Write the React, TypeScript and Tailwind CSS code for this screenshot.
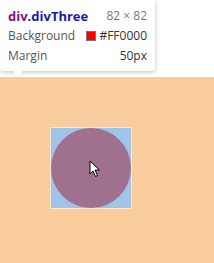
// Inspect tooltip over a peach page with a highlighted circle element.
export default function App() {
  return (
    <div className="flex min-h-screen flex-col bg-[#f9cc9d] font-['Open_Sans','Noto_Sans',sans-serif]">
      {/* top strip with devtools tooltip */}
      <div className="relative h-[77px] bg-white">
        <div className="relative w-[155px] rounded-b-[3px] bg-white px-2 pt-[6px] text-[12px] leading-[20px] text-[#555] shadow-[0_1px_5px_rgba(0,0,0,0.25)]">
          <div className="flex items-center justify-between">
            <span className="text-[13px] font-bold">
              <span className="text-[#881280]">div</span>
              <span className="text-[#1a1aa6]">.divThree</span>
            </span>
            <span className="text-[#777]">82 × 82</span>
          </div>
          <div className="flex justify-between">
            <span>Background</span>
            <span className="flex items-center gap-[3px] text-[#333]">
              <span className="h-[10px] w-[10px] border border-[#777] bg-[#ff0000]" />
              #FF0000
            </span>
          </div>
          <div className="flex justify-between pb-[5px]">
            <span>Margin</span>
            <span className="text-[#333]">50px</span>
          </div>
          <div className="absolute bottom-[-5px] left-[13px] h-0 w-0 border-x-[5px] border-t-[5px] border-x-transparent border-t-white" />
        </div>
      </div>

      {/* page body */}
      <div className="p-[50px]">
        <div className="relative flex h-[82px] w-[82px] items-center justify-center border border-[#fbe6cf] bg-[#9fc4e7]">
          <div className="h-[80px] w-[80px] rounded-full bg-[#a0708f]" />
          <svg className="absolute left-[38px] top-[32px]" width="12" height="18" viewBox="0 0 12 18">
            <path d="M1 1 L1 14 L4 11 L6.5 16.5 L8.5 15.5 L6 10 L10.5 10 Z" fill="white" stroke="black" strokeWidth="1" strokeLinejoin="round" />
          </svg>
        </div>
      </div>
    </div>
  );
}
